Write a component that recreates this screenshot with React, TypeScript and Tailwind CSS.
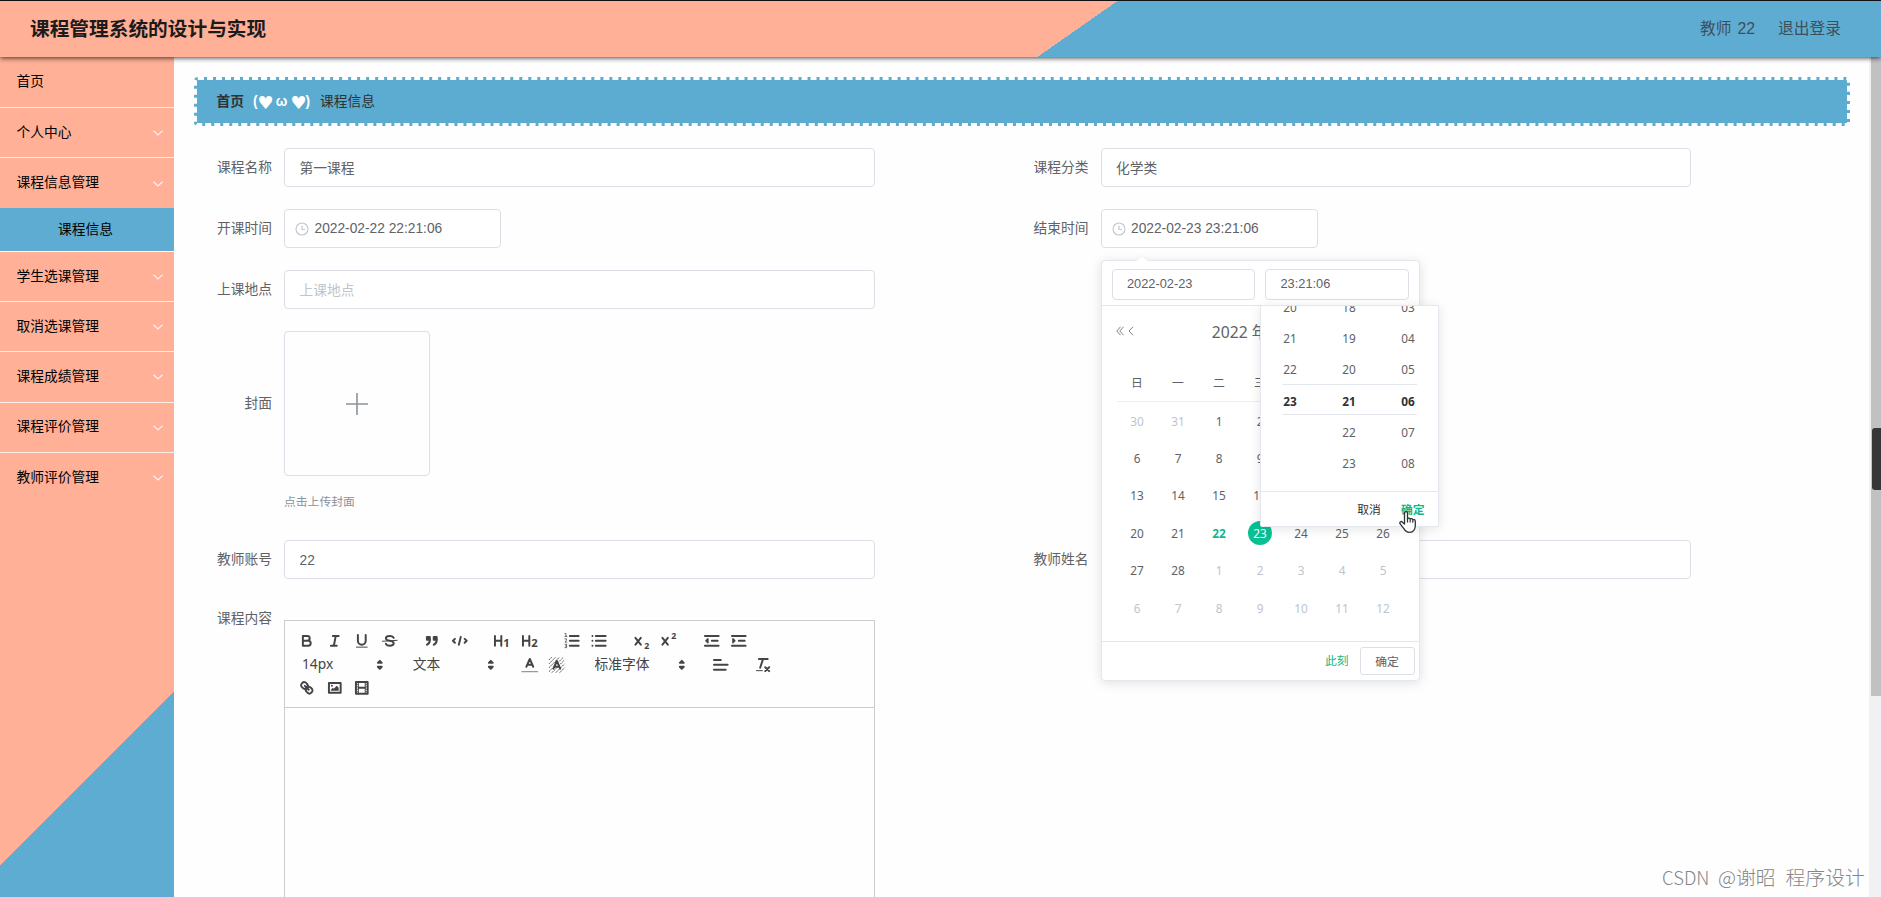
import { ReactNode } from "react";
import clsx from "clsx";

const menu: { label: string; children?: string[]; leaf?: boolean }[] = [
  { label: "首页", leaf: true },
  { label: "个人中心" },
  { label: "课程信息管理", children: ["课程信息"] },
  { label: "学生选课管理" },
  { label: "取消选课管理" },
  { label: "课程成绩管理" },
  { label: "课程评价管理" },
  { label: "教师评价管理" },
];

const weekDays = ["日", "一", "二", "三", "四", "五", "六"];

const weeks = [
  [30, 31, 1, 2, 3, 4, 5],
  [6, 7, 8, 9, 10, 11, 12],
  [13, 14, 15, 16, 17, 18, 19],
  [20, 21, 22, 23, 24, 25, 26],
  [27, 28, 1, 2, 3, 4, 5],
  [6, 7, 8, 9, 10, 11, 12],
];

const spinners = [
  ["20", "21", "22", "23", "", ""],
  ["18", "19", "20", "21", "22", "23"],
  ["03", "04", "05", "06", "07", "08"],
];

function Chevron() {
  return (
    <svg width="10" height="6" viewBox="0 0 10 6" fill="none" stroke="#fff" strokeOpacity="0.85" strokeWidth="1.2">
      <path d="M0.5 0.7 5 5 9.5 0.7" />
    </svg>
  );
}

function Clock() {
  return (
    <svg width="14" height="14" viewBox="0 0 14 14" fill="none" stroke="#c3c5cf" strokeWidth="1.1">
      <circle cx="7" cy="7" r="6" />
      <path d="M7 3.500v4h3" />
    </svg>
  );
}

function Header() {
  return (
    <header className="relative z-10 flex h-[57px] shrink-0 items-center justify-between border-t border-[#111] bg-[linear-gradient(145deg,#ffb097_640.9px,#5eacd1_640.9px)] pr-10 pl-[30px] shadow-[0_1px_5px_rgba(0,0,0,0.75)]">
      <h1 className="text-[19.7px] leading-[56px] font-bold text-[#1c1a1a]">课程管理系统的设计与实现</h1>
      <div className="flex gap-[23px] text-[15.75px] leading-[54px] text-[#3e4f5a]">
        <span className="[word-spacing:1.5px]">教师 22</span>
        <span>退出登录</span>
      </div>
    </header>
  );
}

function Sidebar() {
  return (
    <aside className="w-[174px] shrink-0 bg-[linear-gradient(135deg,#ffb097_571.7px,#5eacd1_571.7px)] text-[13.75px] text-black">
      {menu.map((item, i) => (
        <div key={item.label}>
          <div
            className={clsx(
              "flex items-center justify-between pt-px pr-[11px] pl-[16.5px]",
              i === 0 ? "h-[51px]" : "h-[50.15px]",
              i < menu.length - 1 && !item.children && "border-b border-[#fdeee8]"
            )}
          >
            <span>{item.label}</span>
            {!item.leaf && <Chevron />}
          </div>
          {item.children?.map((child) => (
            <div key={child} className="h-[43.85px] border-b border-white bg-[#5eacd1] pl-[58px] leading-[43px]">
              {child}
            </div>
          ))}
        </div>
      ))}
    </aside>
  );
}

function Field({
  label,
  children,
  className,
  labelClass,
}: {
  label: string;
  children: ReactNode;
  className?: string;
  labelClass?: string;
}) {
  return (
    <div className={clsx("flex", className)}>
      <div
        className={clsx(
          "w-[90px] shrink-0 pr-[12px] text-right text-[13.75px] text-[#606266]",
          labelClass ?? "leading-[39px]"
        )}
      >
        {label}
      </div>
      {children}
    </div>
  );
}

function Input({ value, placeholder }: { value?: string; placeholder?: string }) {
  return (
    <div className="h-[39px] w-[590.500px] rounded border border-[#dcdfe6] bg-white px-[14.500px] text-[13.75px] leading-[39px] text-[#606266]">
      {value ?? <span className="text-[#c0c4cc]">{placeholder}</span>}
    </div>
  );
}

function DateInput({ value }: { value: string }) {
  return (
    <div className="flex h-[39px] w-[217px] items-center gap-[5.500px] rounded border border-[#dcdfe6] bg-white pt-px pl-[10px] text-[13.75px] text-[#606266]">
      <Clock />
      <span>{value}</span>
    </div>
  );
}

function Icon({ children }: { children: ReactNode }) {
  return (
    <svg
      className="mx-[5px] shrink-0"
      width="17.6"
      height="17.6"
      viewBox="0 0 18 18"
      fill="none"
      stroke="#444"
      strokeWidth="2"
      strokeLinecap="round"
      strokeLinejoin="round"
    >
      {children}
    </svg>
  );
}

function IconText({ x, y, size, children }: { x: number; y: number; size: number; children: string }) {
  return (
    <text x={x} y={y} fontSize={size} fontWeight="700" fill="#444" stroke="none" fontFamily="Noto Sans, sans-serif">
      {children}
    </text>
  );
}

function Picker({ label, className }: { label: string; className: string }) {
  return (
    <div className={clsx("flex items-center justify-between pl-[9px]", className)}>
      <span>{label}</span>
      <svg width="17.6" height="17.6" viewBox="0 0 18 18" fill="#444" stroke="#444" strokeWidth="2" strokeLinejoin="round">
        <path d="M7 11 9 13 11 11ZM7 7 9 5 11 7Z" />
      </svg>
    </div>
  );
}

function Group({ children }: { children: ReactNode }) {
  return <div className="mr-[14.7px] flex items-center">{children}</div>;
}

function Toolbar() {
  return (
    <div className="h-[88px] border border-[#ccc] py-[8px] pl-[8px] font-['Noto_Sans','Noto_Sans_CJK_SC',sans-serif] text-[13.75px] text-[#444]">
      <div className="flex h-[23.6px] items-center">
        <Group>
          <Icon>
            <path d="M5 4h4.5a2.5 2.5 0 0 1 0 5H5ZM5 9h5.500a2.500 2.500 0 0 1 0 5H5Z" />
          </Icon>
          <Icon>
            <path d="M7 4h6M5 14h6M8 14 10 4" />
          </Icon>
          <Icon>
            <path d="M5 3v6a4 4 0 0 0 8 0V3" />
            <path d="M3.500 15.500h11" strokeWidth="1" />
          </Icon>
          <Icon>
            <path d="M13 6C12.500 4.700 11 4 9 4 6.800 4 5 5 5 6.500 5 8 6.500 8.700 9 9s4 1 4 2.500S11.200 14 9 14s-3.500-.7-4-2" />
            <path d="M1.500 9.500l15-1" strokeWidth="1" />
          </Icon>
        </Group>
        <Group>
          <Icon>
            <path d="M4 5h3v3H4ZM11 5h3v3h-3Z" fill="#444" />
            <path d="M7 8c0 4-3 5-3 5M14 8c0 4-3 5-3 5" />
          </Icon>
          <Icon>
            <path d="M4 7 2 9l2 2M14 7l2 2-2 2M10 5 8 13" />
          </Icon>
        </Group>
        <Group>
          <Icon>
            <path d="M2 4v10M8.500 4v10M2 9h6.500" />
            <IconText x={10.6} y={15} size={11.5}>1</IconText>
          </Icon>
          <Icon>
            <path d="M2 4v10M8.500 4v10M2 9h6.500" />
            <IconText x={10.6} y={15} size={11.5}>2</IconText>
          </Icon>
        </Group>
        <Group>
          <Icon>
            <path d="M7 4h9M7 9h9M7 14h9" />
            <path d="M2 1.500h1v3M2 4.500h2M2 7h1.500v1.500L2 10.300h2M2 12.500h1.700v3.500H2M2.500 14.300h1" strokeWidth="0.8" />
          </Icon>
          <Icon>
            <path d="M6 4h10M6 9h10M6 14h10M2.500 4h0M2.500 9h0M2.500 14h0" />
          </Icon>
        </Group>
        <Group>
          <Icon>
            <path d="M2.500 6 8 13M8 6 2.500 13" />
            <IconText x={11.5} y={17} size={9}>2</IconText>
          </Icon>
          <Icon>
            <path d="M2.500 6 8 13M8 6 2.500 13" />
            <IconText x={11.5} y={7.5} size={9}>2</IconText>
          </Icon>
        </Group>
        <Group>
          <Icon>
            <path d="M2 14h14M2 4h14M9 9h6" />
            <path d="M5 7v4L3 9Z" fill="#444" strokeWidth="1.5" />
          </Icon>
          <Icon>
            <path d="M2 14h14M2 4h14M9 9h6" />
            <path d="M3 7v4l2-2Z" fill="#444" strokeWidth="1.5" />
          </Icon>
        </Group>
      </div>
      <div className="flex h-[23.6px] items-center">
        <Picker label="14px" className="mr-[14.700px] w-[96px]" />
        <Picker label="文本" className="mr-[16px] w-[96px]" />
        <Group>
          <Icon>
            <path d="M5.500 11 9 3l3.500 8M6.500 9h5" />
            <path d="M1 16h16" stroke="#999" strokeWidth="1.500" />
          </Icon>
          <Icon>
            <path
              d="M1 4l3-3M1 8l7-7M1 12 12 1M1 16 16 1M4 17 17 4M8 17l9-9M12 17l5-5"
              strokeWidth="1"
              strokeDasharray="2 1"
              strokeLinecap="butt"
            />
            <path d="M5.500 13 9 5l3.500 8M6.500 11h5" />
          </Icon>
        </Group>
        <Picker label="标准字体" className="mr-[15.500px] w-[105.500px]" />
        <Group>
          <Icon>
            <path d="M2 4h7M2 9h14M2 14h12" />
          </Icon>
        </Group>
        <Group>
          <Icon>
            <path d="M5 3h9M6.300 12 9.300 3M11.500 11.500l4 4M15.500 11.500l-4 4" />
            <path d="M2.500 15h6" strokeWidth="1" />
          </Icon>
        </Group>
      </div>
      <div className="flex h-[23.6px] items-center">
        <Icon>
          <path d="M7 7l4 4" />
          <path d="M8.900 4.577a3.476 3.476 0 0 1 .36 4.679A3.476 3.476 0 0 1 4.577 8.900C3.185 7.500 2.035 6.400 4.217 4.217S7.500 3.185 8.900 4.577Z" />
          <path d="M13.423 9.100a3.476 3.476 0 0 0-4.679-.36 3.476 3.476 0 0 0 .36 4.679c1.392 1.392 2.500 2.542 4.679.36S14.815 10.500 13.423 9.100Z" />
        </Icon>
        <Icon>
          <rect x="3" y="4" width="12" height="10" />
          <path d="M5 12v-1l2-2 1 1 3-3 2 2v3Z" fill="#444" stroke="none" />
          <circle cx="6" cy="7" r="1" fill="#444" stroke="none" />
        </Icon>
        <Icon>
          <rect x="3" y="3" width="12" height="12" />
          <path d="M5.500 3v12M12.500 3v12" strokeWidth="1" />
          <path d="M6 9h6" />
          <path d="M3 5.500h2M3 8h2M3 10.500h2M3 13h2M13 5.500h2M13 8h2M13 10.500h2M13 13h2" strokeWidth="0.8" />
        </Icon>
      </div>
    </div>
  );
}

function DayCell({ day, row }: { day: number; row: number }) {
  const outside = (row === 0 && day > 7) || (row === 4 && day < 7) || row === 5;
  const today = row === 3 && day === 22;
  const selected = row === 3 && day === 23;
  return (
    <div className="flex h-[37.4px] items-center justify-center">
      <span
        className={clsx(
          "h-6 w-6 text-center leading-6",
          outside && "text-[#c0c4cc]",
          today && "font-bold text-[#0cb98a]",
          selected && "rounded-full bg-[#09c092] text-white"
        )}
      >
        {day}
      </span>
    </div>
  );
}

function TimePanel() {
  return (
    <div className="absolute top-[44px] left-[158px] z-10 w-[179px] rounded-[2px] border border-[#e4e7ed] bg-white shadow-[0_2px_12px_rgba(0,0,0,0.1)]">
      <div className="relative h-[185px] overflow-hidden">
        <div className="mt-[-14.500px] grid grid-cols-3 text-center">
          {spinners.map((values, c) => (
            <div key={c}>
              {values.map((v, i) => (
                <div key={i} className={clsx("h-[31.4px] leading-[31.4px]", i === 3 && "font-bold text-[#303133]")}>
                  {v}
                </div>
              ))}
            </div>
          ))}
        </div>
        <div className="absolute top-[78px] right-[21px] left-[21px] h-[31px] border-y border-[#e4e7ed]" />
      </div>
      <div className="flex h-[35px] justify-end gap-5 border-t border-[#e4e7ed] pr-[13px] leading-[34px]">
        <span className="text-[#303133]">取消</span>
        <span className="font-bold text-[#0cb98a]">确定</span>
      </div>
      <svg className="absolute top-[204px] left-[137px]" width="20" height="24" viewBox="0 0 20 24">
        <path
          d="M6.500 14V3.300c0-2.200 3-2.200 3 0V9c.3-1.300 2.600-1.200 2.700.3.500-1 2.500-.8 2.600.7.700-.8 2.500-.4 2.500 1.300v4.200c0 3-1.500 6.800-5.800 6.800-3 0-4.400-1.500-5.600-3.700L2 13.700c-1-1.800 1.200-3 2.500-1.500Z"
          fill="#fff"
          stroke="#2f3338"
          strokeWidth="1.300"
          strokeLinejoin="round"
        />
        <path d="M9.500 9v3.500M12.200 9.500v3M14.800 10.200v2.600" stroke="#2f3338" strokeWidth="1.200" />
      </svg>
    </div>
  );
}

function DatePicker() {
  return (
    <div className="absolute top-[51px] left-0 z-20 w-[319px] rounded border border-[#e4e7ed] bg-white font-['Noto_Sans','Noto_Sans_CJK_SC',sans-serif] text-[11.8px] text-[#606266] shadow-[0_2px_12px_rgba(0,0,0,0.12)]">
      <svg className="absolute top-[-6px] left-[34px]" width="12" height="7" viewBox="0 0 12 7">
        <path d="M0 6 6 0.500 12 6V7H0Z" fill="#fff" />
        <path d="M0 6 6 0.500 12 6" fill="none" stroke="#ebeef5" />
      </svg>
      <div className="flex h-[45px] gap-[10px] border-b border-[#e4e7ed] px-[10px] pt-[8px] font-['Liberation_Sans',sans-serif] text-[12.8px] leading-[28px]">
        <div className="h-[31px] flex-1 rounded border border-[#dcdfe6] pl-[14.500px]">2022-02-23</div>
        <div className="h-[31px] flex-1 rounded border border-[#dcdfe6] pl-[14.500px]">23:21:06</div>
      </div>
      <div className="px-[15px] pt-[11px]">
        <div className="relative h-[30px] text-center">
          <svg className="absolute top-[9px] left-[-1px]" width="20" height="10" viewBox="0 0 20 10" fill="none" stroke="#7d8087">
            <path d="M4.500 0.800 0.800 5 4.500 9.200M7.500 0.800 3.800 5 7.500 9.200M17 0.800 13 5 17 9.200" />
          </svg>
          <span className="relative -left-[2px] text-[15.7px] leading-[31px]">2022 年&nbsp; 2 月</span>
        </div>
        <div className="mt-[15px] grid h-[40px] grid-cols-[repeat(7,41px)] border-b border-[#ebeef5] text-center leading-[41px]">
          {weekDays.map((d) => (
            <span key={d}>{d}</span>
          ))}
        </div>
        <div className="grid grid-cols-[repeat(7,41px)]">
          {weeks.map((week, r) => week.map((d, c) => <DayCell key={`${r}-${c}`} day={d} row={r} />))}
        </div>
      </div>
      <div className="mt-[14.600px] flex h-[39px] items-center justify-end border-t border-[#e4e7ed] pr-[4px]">
        <span className="mr-[11px] text-[#0cb98a]">此刻</span>
        <div className="h-[28px] w-[55px] rounded-[3px] border border-[#dcdfe6] text-center leading-[26px]">确定</div>
      </div>
      <TimePanel />
    </div>
  );
}

function Heart() {
  return <span className="w-[15px] text-center font-['DejaVu_Sans'] text-[18px] font-normal">♥</span>;
}

export default function App() {
  return (
    <div className="flex h-[897px] w-[1881px] flex-col overflow-hidden bg-[#fefefe] font-['Liberation_Sans','Noto_Sans_CJK_SC',sans-serif]">
      <Header />
      <div className="flex min-h-0 flex-1">
        <Sidebar />
        <main className="min-w-0 flex-1 pt-[20px] pr-[19px] pl-[20px]">
          <nav className="flex h-[49px] items-center rounded-[4px] border-[3px] border-dashed border-white bg-[#5cabd0] pt-px pl-[19.5px] text-[13.75px] text-[#303133]">
            <span className="font-bold">首页</span>
            <span className="ml-[9px] flex w-[57px] items-center font-bold whitespace-nowrap text-white">
              (<Heart />
              <span className="flex-1 text-center">ω</span>
              <Heart />)
            </span>
            <span className="ml-[10px]">课程信息</span>
          </nav>
          <div className="mt-[22px] grid grid-cols-[816.5px_1fr] gap-y-[22px]">
            <Field label="课程名称">
              <Input value="第一课程" />
            </Field>
            <Field label="课程分类">
              <Input value="化学类" />
            </Field>
            <Field label="开课时间">
              <DateInput value="2022-02-22 22:21:06" />
            </Field>
            <Field label="结束时间">
              <div className="relative">
                <DateInput value="2022-02-23 23:21:06" />
                <DatePicker />
              </div>
            </Field>
            <Field label="上课地点" className="col-span-2">
              <Input placeholder="上课地点" />
            </Field>
            <Field label="封面" className="col-span-2 h-[187px]" labelClass="leading-[145px]">
              <div className="flex flex-col">
                <div className="flex h-[145px] w-[146px] items-center justify-center rounded border border-[#dcdfe6]">
                  <svg width="24" height="24" viewBox="0 0 24 24" stroke="#8c939d" strokeWidth="1.600">
                    <path d="M12 1v22M1 12h22" />
                  </svg>
                </div>
                <span className="mt-[17px] text-[11.8px] leading-[18px] text-[#8c939d]">点击上传封面</span>
              </div>
            </Field>
            <Field label="教师账号">
              <Input value="22" />
            </Field>
            <Field label="教师姓名">
              <Input />
            </Field>
            <Field label="课程内容" className="col-span-2 -mt-[2px]">
              <div className="mt-[21px] w-[591px]">
                <Toolbar />
                <div className="h-[220px] border-x border-[#ccc]" />
              </div>
            </Field>
          </div>
        </main>
        <div className="relative w-3 bg-[#f1f0f3] pl-[2px]">
          <div className="h-[639px] bg-[#c1c1c1]" />
          <div className="absolute top-[371px] right-0 h-[62px] w-[9px] rounded-l-[3px] bg-[#363636]" />
        </div>
      </div>
      <div className="absolute top-[862px] left-[1662px] z-30 flex text-[19.800px] leading-[30px] font-light whitespace-nowrap text-[#868686] font-['Noto_Sans_CJK_SC',sans-serif]">
        <span className="w-[56px] text-[18.500px]">CSDN</span>
        <span>@谢昭</span>
        <span className="ml-[10px]">程序设计</span>
      </div>
    </div>
  );
}
